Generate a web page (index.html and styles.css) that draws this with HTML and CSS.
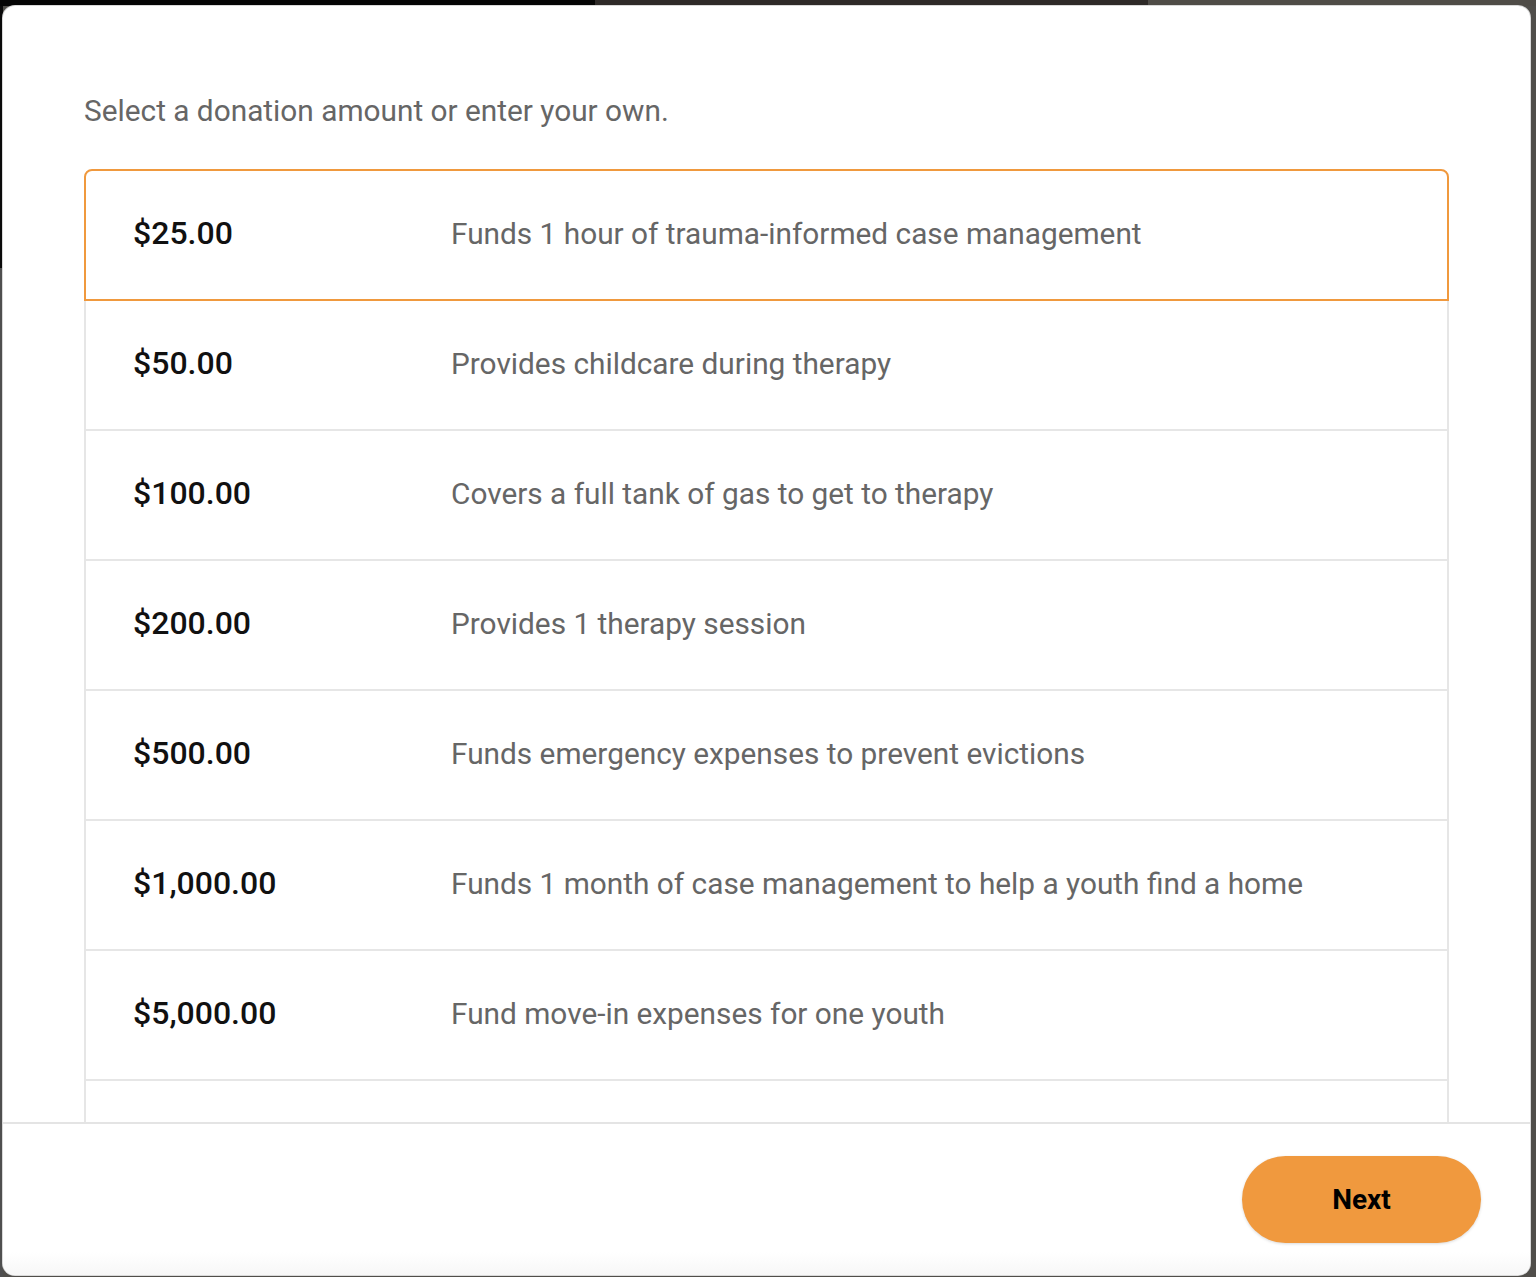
FILE: index.html
```html
<!DOCTYPE html>
<html lang="en">
<head>
<meta charset="utf-8">
<title>Donation</title>
<link rel="stylesheet" href="styles.css">
</head>
<body>
<div class="modal">
  <div class="modal-body">
    <p class="intro">Select a donation amount or enter your own.</p>
    <ul class="options">
      <li class="option selected"><span class="amount">$25.00</span><span class="desc">Funds 1 hour of trauma-informed case management</span></li>
      <li class="option"><span class="amount">$50.00</span><span class="desc">Provides childcare during therapy</span></li>
      <li class="option"><span class="amount">$100.00</span><span class="desc">Covers a full tank of gas to get to therapy</span></li>
      <li class="option"><span class="amount">$200.00</span><span class="desc">Provides 1 therapy session</span></li>
      <li class="option"><span class="amount">$500.00</span><span class="desc">Funds emergency expenses to prevent evictions</span></li>
      <li class="option"><span class="amount">$1,000.00</span><span class="desc">Funds 1 month of case management to help a youth find a home</span></li>
      <li class="option"><span class="amount">$5,000.00</span><span class="desc">Fund move-in expenses for one youth</span></li>
      <li class="option option-empty"></li>
    </ul>
  </div>
  <div class="modal-footer">
    <button class="next-btn" type="button">Next</button>
  </div>
</div>
</body>
</html>
```

FILE: styles.css
```css
* { box-sizing: border-box; }

html, body {
  margin: 0;
  padding: 0;
  height: 1277px;
  overflow: hidden;
}

body {
  font-family: Roboto, "Liberation Sans", Arial, sans-serif;
  background:
    linear-gradient(to right, #050505 0 595px, #2e2a28 595px 1148px, #4f4c47 1148px) left top / 100% 6px no-repeat,
    linear-gradient(#0a0a0a 0 268px, #4f4f4f 268px) left top / 3px 100% no-repeat,
    #504e4a;
  padding: 6px 6px 2px 3px;
}

.modal {
  height: 1269px;
  background: #fff;
  border-radius: 12px;
  box-shadow: 0 0 0 1px #d9d9d9;
  display: flex;
  flex-direction: column;
  overflow: hidden;
}

.modal-body {
  flex: 1;
  overflow: hidden;
  padding: 84px 81px 0 81px;
  border-bottom: 2px solid #e4e4e4;
}

.intro {
  margin: 0 0 37px 0;
  font-size: 29.8px;
  line-height: 42px;
  color: #666;
}

.options {
  list-style: none;
  margin: 0;
  padding: 0;
}

.option {
  display: grid;
  grid-template-columns: 318px 1fr;
  align-items: center;
  height: 130px;
  padding: 0 0 4px 47px;
  border: 2px solid #e6e6e6;
  border-top: none;
}

.option.selected {
  height: 132px;
  border: 2px solid #f0993e;
  border-radius: 8px 8px 0 0;
}

.amount {
  font-size: 32px;
  font-weight: 500;
  color: #111;
}

.desc {
  font-size: 29.8px;
  color: #666;
}

.modal-footer {
  height: 151px;
  display: flex;
  justify-content: flex-end;
  align-items: flex-start;
  padding: 32px 49px 0 0;
  background: linear-gradient(#fff 0 128px, #f7f7f7 151px);
}

.next-btn {
  width: 239px;
  height: 87px;
  border: none;
  border-radius: 44px;
  background: #f0993e;
  color: #000;
  font-family: Roboto, "Liberation Sans", Arial, sans-serif;
  font-size: 28px;
  font-weight: 700;
  box-shadow: 0 1px 3px rgba(0,0,0,0.15);
  cursor: pointer;
}
```
